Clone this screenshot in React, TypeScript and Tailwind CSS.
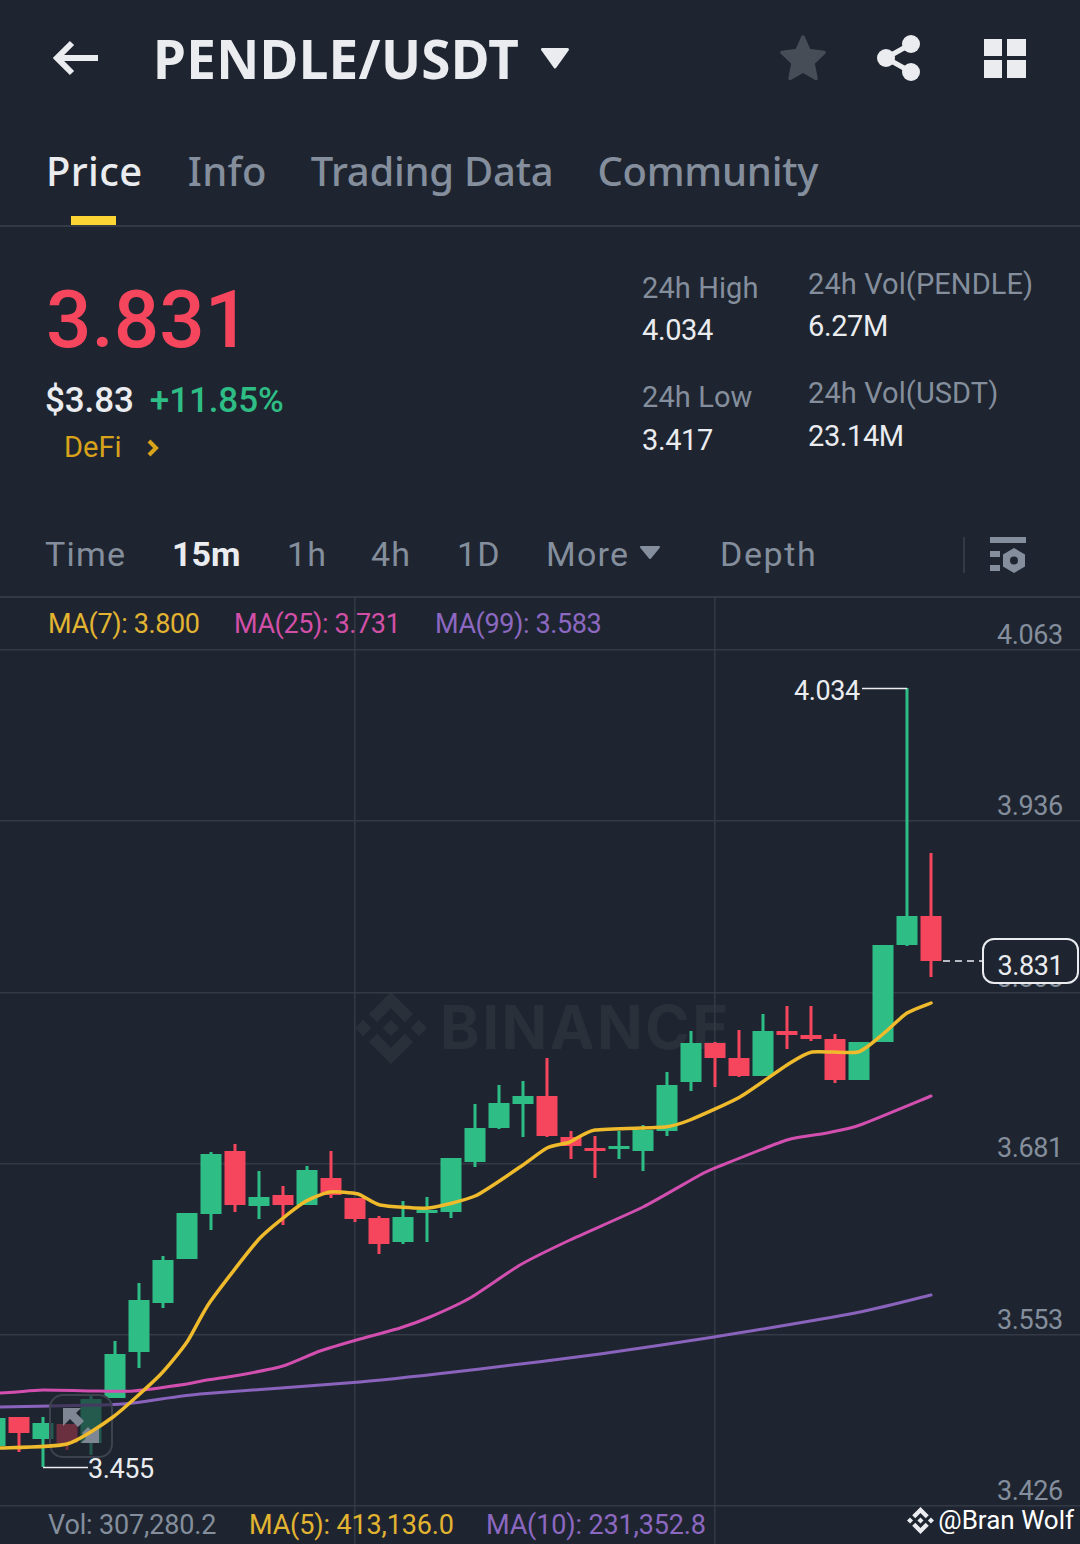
const UP = "#2ebd85";
const DOWN = "#f6465d";
const GRID = "#343a45";

// x center, body top, body bottom, wick top, wick bottom, up?
const candles: [number, number, number, number, number, boolean][] = [
  [-5, 1418, 1446, 1418, 1446, true],
  [19, 1417, 1433, 1417, 1452, false],
  [43, 1423, 1439, 1417, 1467, true],
  [67, 1424, 1443, 1424, 1450, false],
  [91, 1399, 1443, 1395, 1455, true],
  [115, 1354, 1398, 1341, 1398, true],
  [139, 1300, 1352, 1283, 1368, true],
  [163, 1260, 1303, 1256, 1308, true],
  [187, 1213, 1259, 1213, 1259, true],
  [211, 1154, 1214, 1152, 1230, true],
  [235, 1151, 1205, 1144, 1212, false],
  [259, 1197, 1206, 1171, 1219, true],
  [283, 1195, 1205, 1186, 1225, false],
  [307, 1170, 1205, 1166, 1205, true],
  [331, 1178, 1195, 1151, 1198, false],
  [355, 1198, 1219, 1198, 1222, false],
  [379, 1218, 1244, 1216, 1254, false],
  [403, 1217, 1242, 1201, 1244, true],
  [427, 1210, 1212, 1197, 1242, true],
  [451, 1158, 1212, 1158, 1218, true],
  [475, 1128, 1162, 1104, 1167, true],
  [499, 1103, 1128, 1085, 1129, true],
  [523, 1096, 1104, 1081, 1137, true],
  [547, 1096, 1136, 1058, 1137, false],
  [571, 1137, 1146, 1131, 1159, false],
  [595, 1148, 1151, 1136, 1178, false],
  [619, 1146, 1148, 1131, 1159, true],
  [643, 1130, 1151, 1125, 1171, true],
  [667, 1085, 1131, 1072, 1136, true],
  [691, 1043, 1082, 1031, 1091, true],
  [715, 1043, 1058, 1042, 1087, false],
  [739, 1058, 1076, 1030, 1077, false],
  [763, 1031, 1076, 1014, 1076, true],
  [787, 1031, 1035, 1006, 1049, false],
  [811, 1035, 1039, 1006, 1041, false],
  [835, 1039, 1080, 1034, 1083, false],
  [859, 1042, 1080, 1042, 1080, true],
  [883, 945, 1042, 945, 1042, true],
  [907, 916, 945, 688, 946, true],
  [931, 916, 961, 853, 977, false],
];

const ma7 = "0,1448 67,1444 113,1417 160,1375 187,1342 210,1302 260,1238 303,1203 330,1192 358,1194 380,1205 428,1208 475,1196 520,1167 547,1148 570,1142 595,1130 665,1127 690,1120 740,1097 787,1065 812,1052 858,1052 883,1034 907,1013 931,1003";
const ma25 = "0,1393 17,1392 43,1390 100,1391 133,1391 187,1384 207,1380 240,1375 283,1366 320,1351 360,1339 400,1328 430,1317 470,1298 520,1265 570,1240 643,1207 700,1175 720,1166 787,1140 827,1133 860,1125 931,1096";
const ma99 = "0,1407 100,1405 133,1403 200,1394 360,1382 480,1369 600,1354 714,1337 860,1312 931,1295";

// rounds the corners between sampled points, the averages aren't polygons
function smooth(points: string) {
  const p = points.split(" ").map((s) => s.split(",").map(Number));
  let d = `M${p[0][0]} ${p[0][1]}`;
  for (let i = 0; i < p.length - 1; i++) {
    const a = p[Math.max(i - 1, 0)];
    const b = p[i];
    const c = p[i + 1];
    const e = p[Math.min(i + 2, p.length - 1)];
    const c1x = b[0] + (c[0] - a[0]) / 10;
    const c1y = b[1] + (c[1] - a[1]) / 10;
    const c2x = c[0] - (e[0] - b[0]) / 10;
    const c2y = c[1] - (e[1] - b[1]) / 10;
    d += ` C${c1x} ${c1y} ${c2x} ${c2y} ${c[0]} ${c[1]}`;
  }
  return d;
}

const priceAxis: [string, number][] = [
  ["4.063", 634],
  ["3.936", 805],
  ["3.681", 1147],
  ["3.553", 1319],
  ["3.426", 1490],
];

function BinanceMark({ className, fill }: { className: string; fill: string }) {
  return (
    <svg viewBox="0 0 24 24" className={className} fill={fill}>
      <path d="M16.624 13.9202l2.7175 2.7154-7.353 7.353-7.353-7.352 2.7175-2.7164 4.6355 4.6595 4.6356-4.6595zm4.6366-4.6366L24 12l-2.7154 2.7164L18.5682 12l2.6924-2.7164zm-9.272.001l2.7163 2.6914-2.7164 2.7174v-.001L9.2721 12l2.7164-2.7154zm-9.2722-.001L5.4088 12l-2.6914 2.7164L0 12l2.7164-2.7164zM11.9885.0115l7.353 7.329-2.7174 2.7154-4.6356-4.6356-4.6355 4.6595-2.7174-2.7154 7.353-7.353z" />
    </svg>
  );
}

function Chart() {
  return (
    <svg viewBox="0 598 1080 946" className="absolute inset-0 w-[1080px] h-[946px]">
      {[649, 820, 992, 1163, 1334, 1505].map((y) => (
        <rect key={y} x="0" y={y} width="1080" height="1.5" fill={GRID} />
      ))}
      <rect x="354" y="598" width="1.5" height="946" fill={GRID} />
      <rect x="714" y="598" width="1.5" height="946" fill={GRID} />
      {candles.map(([x, top, bottom, wickTop, wickBottom, up]) => (
        <g key={x} fill={up ? UP : DOWN}>
          <rect x={x - 1.5} y={wickTop} width="3" height={wickBottom - wickTop} />
          <rect x={x - 10.5} y={top} width="21" height={Math.max(bottom - top, 3)} />
        </g>
      ))}
      <path d="M862 688.500H907M43 1467.500H88" stroke="#eaecef" strokeWidth="1.5" fill="none" />
      <path d="M943 961H982" stroke="#eaecef" strokeWidth="1.5" strokeDasharray="7 5" fill="none" />
      <path d={smooth(ma99)} fill="none" stroke="#8a63bd" strokeWidth="3" strokeLinecap="round" />
      <path d={smooth(ma25)} fill="none" stroke="#d24fb0" strokeWidth="3" strokeLinecap="round" />
      {/* faded full screen button sitting on the candles */}
      <rect x="50" y="1395" width="62" height="62" rx="13" fill="#1e2530" fillOpacity="0.65" stroke="#3d434e" strokeWidth="2" />
      <path d="M63 1408H81L76 1413 84 1421 78 1427 70 1419 63 1426Z" fill="#7f8794" />
      <path d="M99 1443H81L86 1438 82 1433 88 1427 93 1432 99 1426Z" fill="#7f8794" />
      <path d={smooth(ma7)} fill="none" stroke="#efba2c" strokeWidth="3.5" strokeLinecap="round" />
    </svg>
  );
}

export default function App() {
  return (
    <div className="w-[1080px] h-[1544px] overflow-hidden bg-[#1e2530] text-[#eaecef] font-['Roboto',sans-serif]">
      <div className="h-[116px] flex items-center pl-[52px] pr-[54px]">
        <svg viewBox="0 0 46 36" className="w-[46px] h-[36px]" fill="none" stroke="#eaecef" strokeWidth="6">
          <path d="M46 18H5M20 3 5 18 20 33" />
        </svg>
        <div className="ml-[55px] text-[53px] leading-none font-bold font-['Noto_Sans',sans-serif] tracking-[0.3px]">PENDLE/USDT</div>
        <svg viewBox="0 0 28 21" className="ml-[22px] w-[28px] h-[21px]" fill="#eaecef">
          <path d="M1.500 1.500H26.500L14 19Z" stroke="#eaecef" strokeWidth="3" strokeLinejoin="round" />
        </svg>
        <svg viewBox="0 0 46 46" className="ml-auto w-[46px] h-[46px]" fill="#474d57">
          <path d="M23 2 29 15.500 44 17.500 33 28 36 43.500 23 36 10 43.500 13 28 2 17.500 17 15.500Z" stroke="#474d57" strokeWidth="3.500" strokeLinejoin="round" />
        </svg>
        <svg viewBox="0 0 44 46" className="ml-[51px] w-[44px] h-[46px]" fill="#eaecef">
          <circle cx="9" cy="23" r="9" />
          <circle cx="34" cy="9" r="9" />
          <circle cx="34" cy="37" r="9" />
          <path d="M9 23 34 9M9 23 34 37" stroke="#eaecef" strokeWidth="5" />
        </svg>
        <div className="ml-[63px] grid grid-cols-2 gap-[4px]">
          <div className="w-[18px] h-[17px] bg-[#eaecef]" />
          <div className="w-[19px] h-[17px] bg-[#eaecef]" />
          <div className="w-[18px] h-[18px] bg-[#eaecef]" />
          <div className="w-[19px] h-[18px] bg-[#eaecef]" />
        </div>
      </div>

      <div className="h-[111px] border-b-[2px] border-[#343a45] flex items-start pt-[31px] pl-[46px] text-[40px] leading-[48px] font-medium text-[#848e9c] font-['Noto_Sans',sans-serif] tracking-[-0.25px]">
        <div className="relative h-[78px] text-[#eaecef] tracking-[0.4px]">
          Price
          <div className="absolute left-[25px] bottom-0 w-[45px] h-[9px] bg-[#fcd535]" />
        </div>
        <div className="ml-[45px] tracking-[0.25px]">Info</div>
        <div className="ml-[44px]">Trading Data</div>
        <div className="ml-[44px]">Community</div>
      </div>

      <div className="h-[293px] flex pl-[45px]">
        <div className="w-[597px] pt-[50px]">
          <div className="text-[80px] leading-[86px] font-medium text-[#f6465d] pl-[1px]">3.831</div>
          <div className="mt-[16px] flex items-center h-[44px] text-[35px] tracking-[-0.1px]">
            <span className="font-medium">$3.83</span>
            <span className="ml-[16px] font-medium text-[#2ebd85]">+11.85%</span>
          </div>
          <div className="mt-[5px] ml-[19px] flex items-center h-[40px] text-[29px] text-[#d9a21b]">
            DeFi
            <svg viewBox="0 0 14 18" className="ml-[24px] w-[14px] h-[18px]" fill="none" stroke="#d9a21b" strokeWidth="4">
              <path d="M3 2 10 9 3 16" />
            </svg>
          </div>
        </div>
        <div className="w-[166px] pt-[43px] text-[29px] leading-[36px] tracking-[0.1px]">
          <div className="text-[#848e9c]">24h High</div>
          <div className="mt-[6px] tracking-[-0.4px]">4.034</div>
          <div className="mt-[31px] text-[#848e9c]">24h Low</div>
          <div className="mt-[7px] tracking-[-0.4px]">3.417</div>
        </div>
        <div className="pt-[39px] text-[29px] leading-[36px] tracking-[0.1px]">
          <div className="text-[#848e9c]">24h Vol(PENDLE)</div>
          <div className="mt-[6px] tracking-[-0.4px]">6.27M</div>
          <div className="mt-[31px] text-[#848e9c]">24h Vol(USDT)</div>
          <div className="mt-[7px] tracking-[-0.4px]">23.14M</div>
        </div>
      </div>

      <div className="h-[78px] border-b-[2px] border-[#343a45] flex items-center pl-[45px] pb-[7px] text-[34px] text-[#848e9c] tracking-[1.2px]">
        <span className="w-[127px]">Time</span>
        <span className="w-[115px] font-bold text-[#eaecef] tracking-normal">15m</span>
        <span className="w-[84px]">1h</span>
        <span className="w-[86px]">4h</span>
        <span className="w-[89px]">1D</span>
        <span className="w-[94px]">More</span>
        <svg viewBox="0 0 20 13" className="w-[20px] h-[13px] mb-[4px]" fill="#848e9c">
          <path d="M1 1H19L10 12Z" stroke="#848e9c" strokeWidth="2" strokeLinejoin="round" />
        </svg>
        <span className="ml-[60px] tracking-[1.6px]">Depth</span>
        <div className="ml-auto w-[2px] h-[36px] bg-[#343a45]" />
        <svg viewBox="0 0 37 36" className="ml-[25px] mr-[53px] w-[37px] h-[36px]" fill="#848e9c">
          <rect x="0" y="0" width="36" height="6" />
          <rect x="0" y="14" width="10" height="6" />
          <rect x="0" y="28" width="10" height="6" />
          <path fillRule="evenodd" d="M24 11 35 17.500V29.500L24 36 13 29.500V17.500ZM24 19.500A4 4 0 1 0 24 27.500 4 4 0 1 0 24 19.500Z" />
        </svg>
      </div>

      <div className="relative h-[946px] flex flex-col text-[27px] tracking-[-0.4px]">
        <div className="absolute left-[355px] top-[393px] w-[370px] h-[73px] flex items-center">
          <BinanceMark className="w-[72px] h-[72px] shrink-0" fill="#2a303a" />
          <span className="ml-[13px] mb-[2px] shrink-0 text-[60px] leading-none font-bold text-[#2a303a] font-['Inter',sans-serif] tracking-[2.5px]">BINANCE</span>
        </div>
        <Chart />
        <div className="relative h-[52px] flex items-center pl-[48px]">
          <span className="w-[186px] text-[#e2b431]">MA(7): 3.800</span>
          <span className="w-[201px] text-[#d24fa8]">MA(25): 3.731</span>
          <span className="text-[#8c68c0]">MA(99): 3.583</span>
        </div>
        {priceAxis.map(([label, y]) => (
          <div key={label} style={{ top: y - 598 - 17 }} className="absolute left-[997px] leading-[36px] text-[#848e9c]">
            {label}
          </div>
        ))}
        <div className="absolute left-[997px] top-[362px] leading-[36px] text-[#848e9c]">3.808</div>
        <div className="absolute left-[794px] top-[75px] leading-[36px] text-[#eaecef]">4.034</div>
        <div className="absolute left-[88px] top-[853px] leading-[36px] text-[#eaecef]">3.455</div>
        <div className="absolute left-[982px] top-[340px] w-[97px] h-[46px] rounded-[12px] border-[2px] border-[#eaecef] bg-[#1e2530] flex items-center justify-center text-[#eaecef] pt-[10px]">
          3.831
        </div>
        <div className="relative mt-auto h-[38px] flex items-center pl-[48px] tracking-[-0.15px]">
          <span className="w-[201px] text-[#848e9c]">Vol: 307,280.2</span>
          <span className="w-[237px] text-[#e2b431]">MA(5): 413,136.0</span>
          <span className="text-[#8c68c0]">MA(10): 231,352.8</span>
          <div className="ml-auto pr-[6px] mb-[9px] flex items-center text-[26px] tracking-normal text-white">
            <BinanceMark className="w-[27px] h-[27px] mr-[4px] shrink-0" fill="#eaecef" />
            @Bran Wolf
          </div>
        </div>
      </div>
    </div>
  );
}
